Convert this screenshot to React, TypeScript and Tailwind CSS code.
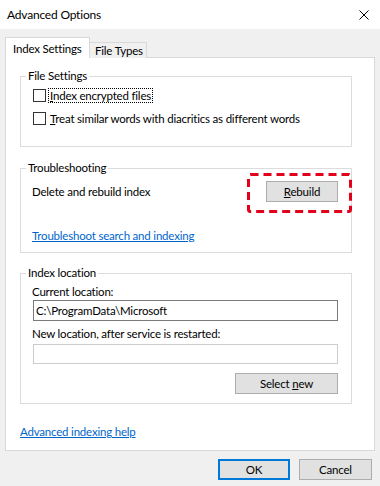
import React from "react";

function WinButton({
  children,
  className = "",
}: {
  children: React.ReactNode;
  className?: string;
}) {
  return (
    <div
      className={`h-[21px] flex items-center justify-center bg-[#e1e1e1] border border-[#adadad] ${className}`}
    >
      {children}
    </div>
  );
}

function Checkbox({ label, focused }: { label: React.ReactNode; focused?: boolean }) {
  return (
    <div className="flex items-center h-[20px] gap-[2px]">
      <div className="w-[13px] h-[13px] border border-[#333333] bg-white shrink-0" />
      <span
        className={`leading-[13px] px-px whitespace-nowrap ${
          focused ? "border border-dotted border-black" : "border border-transparent"
        }`}
      >
        {label}
      </span>
    </div>
  );
}

function Group({
  title,
  className = "",
  children,
}: {
  title: string;
  className?: string;
  children: React.ReactNode;
}) {
  return (
    <fieldset className={`w-[332px] ml-[14px] border border-[#dcdcdc] p-0 ${className}`}>
      <legend className="ml-[5px] px-[2px] leading-[14px]">{title}</legend>
      {children}
    </fieldset>
  );
}

export default function App() {
  return (
    <div className="w-[380px] h-[486px] bg-[#f0f0f0] flex flex-col text-[11.5px] tracking-[-0.2px] text-black font-['Lato',sans-serif] whitespace-nowrap">
      {/* 타이틀 바 */}
      <div className="h-[29px] bg-white flex items-center justify-between pl-[7px] pr-[11px]">
        <span className="text-[12px]">Advanced Options</span>
        <svg width="10" height="10" viewBox="0 0 10 10">
          <path d="M0.5 0.5 L9.5 9.5 M9.5 0.5 L0.5 9.5" stroke="#000" strokeWidth="1" />
        </svg>
      </div>

      <div className="px-[5px] pt-[8px]">
        {/* 탭 */}
        <div className="flex items-end -mb-px">
          <div className="relative z-10 h-[21px] w-[85px] bg-white border border-b-0 border-[#d9d9d9] pl-[7px] pt-[2px]">
            Index Settings
          </div>
          <div className="h-[16px] w-[57px] bg-[#f0f0f0] border border-b-0 border-l-0 border-[#d9d9d9] pl-[5px] leading-[15px]">
            File Types
          </div>
        </div>

        {/* 탭 패널 */}
        <div className="h-[394px] bg-white border border-[#d9d9d9] flex flex-col">
          <Group title="File Settings" className="mt-[11px]">
            <div className="pt-[2px] pl-[12px] pb-[18px] flex flex-col gap-[3px]">
              <Checkbox
                focused
                label={
                  <>
                    <u>I</u>ndex encrypted files
                  </>
                }
              />
              <Checkbox
                label={
                  <>
                    <u>T</u>reat similar words with diacritics as different words
                  </>
                }
              />
            </div>
          </Group>

          <Group title="Troubleshooting" className="mt-[14px]">
            <div className="pt-[6px] pl-[11px] pr-[13px] pb-[8px] flex flex-col">
              <div className="flex items-center justify-between h-[21px]">
                <span>Delete and rebuild index</span>
                <div className="relative">
                  <WinButton className="w-[72px]">
                    <span>
                      <u>R</u>ebuild
                    </span>
                  </WinButton>
                  <svg
                    className="absolute left-[-19px] top-[-8px] pointer-events-none"
                    width="105"
                    height="40"
                    viewBox="0 0 105 40"
                  >
                    <rect
                      x="1.5"
                      y="1.5"
                      width="102"
                      height="37"
                      rx="2"
                      fill="none"
                      stroke="#e2001a"
                      strokeWidth="3"
                      strokeDasharray="8 5"
                    />
                  </svg>
                </div>
              </div>
              <span className="mt-[26px] leading-[16px] text-[#0066cc] underline self-start">
                Troubleshoot search and indexing
              </span>
            </div>
          </Group>

          <Group title="Index location" className="mt-[13px]">
            <div className="pt-[4px] pl-[12px] pr-[13px] pb-[9px] flex flex-col">
              <span className="leading-[16px] -ml-px">Current location:</span>
              <div className="h-[21px] border border-[#7a7a7a] flex items-center pl-[2px]">
                C:\ProgramData\Microsoft
              </div>
              <span className="mt-[5px] leading-[16px] -ml-px">
                New location, after service is restarted:
              </span>
              <div className="mt-[2px] h-[20px] border border-[#cccccc]" />
              <WinButton className="mt-[9px] w-[103px] self-end">
                <span>
                  Select <u>n</u>ew
                </span>
              </WinButton>
            </div>
          </Group>

          <span className="mt-[20px] ml-[14px] leading-[16px] text-[#0066cc] underline self-start">
            Advanced indexing help
          </span>
        </div>
      </div>

      {/* 하단 버튼 */}
      <div className="flex justify-end gap-[9px] pr-[8px] mt-[8px]">
        <div className="h-[21px] w-[72px] flex items-center justify-center bg-[#e1e1e1] border-2 border-[#0078d7]">
          OK
        </div>
        <WinButton className="w-[73px]">Cancel</WinButton>
      </div>
    </div>
  );
}
